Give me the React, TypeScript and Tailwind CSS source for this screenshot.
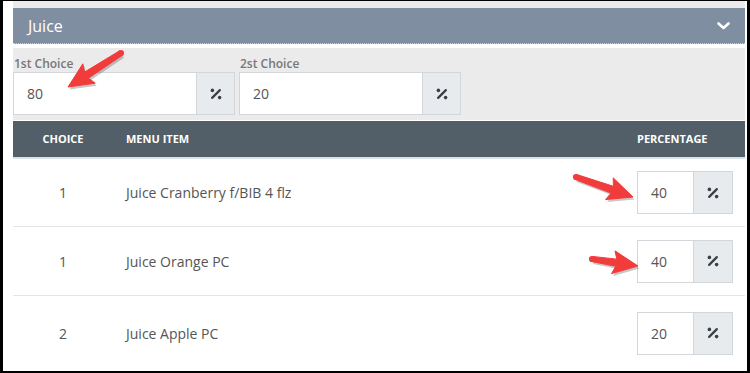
import React from 'react';

const font = { fontFamily: '"Open Sans", "Liberation Sans", sans-serif' };

function PercentIcon() {
  return (
    <svg width="12" height="12" viewBox="0 0 10 10" className="text-[#3a4046]">
      <line x1="1.8" y1="8.2" x2="8.2" y2="1.8" stroke="currentColor" strokeWidth="1.9" strokeLinecap="round" />
      <circle cx="2" cy="2" r="1.5" fill="currentColor" />
      <circle cx="8" cy="8" r="1.5" fill="currentColor" />
    </svg>
  );
}

function PercentInput({ value, inputClass, buttonClass }: { value: string; inputClass: string; buttonClass: string }) {
  return (
    <div className="flex h-[43px]">
      <div className={`flex items-center bg-white border border-[#d3d7dc] text-[14px] text-[#555] ${inputClass}`}>{value}</div>
      <div className={`flex items-center justify-center bg-[#e8ebee] border border-l-0 border-[#d3d7dc] ${buttonClass}`}>
        <PercentIcon />
      </div>
    </div>
  );
}

function Arrow({ from, to }: { from: [number, number]; to: [number, number] }) {
  const [x1, y1] = from;
  const [x2, y2] = to;
  const dx = x2 - x1;
  const dy = y2 - y1;
  const len = Math.hypot(dx, dy);
  const ux = dx / len;
  const uy = dy / len;
  const nx = -uy;
  const ny = ux;
  const head = 22;
  const hw = 11.5;
  const sw = 3.6;
  const tw = 2.6;
  const bx = x2 - ux * head;
  const by = y2 - uy * head;
  const pts = [
    [x1 + nx * tw, y1 + ny * tw],
    [bx + nx * sw, by + ny * sw],
    [bx + nx * hw - ux * 3, by + ny * hw - uy * 3],
    [x2, y2],
    [bx - nx * hw - ux * 3, by - ny * hw - uy * 3],
    [bx - nx * sw, by - ny * sw],
    [x1 - nx * tw, y1 - ny * tw],
  ]
    .map((p) => p.join(','))
    .join(' ');
  return (
    <g>
      <polygon points={pts} fill="#000" opacity="0.22" transform="translate(1.5,2.5)" />
      <polygon points={pts} fill="#f23b3b" strokeLinejoin="round" stroke="#f23b3b" strokeWidth="1" />
      <circle cx={x1} cy={y1} r={tw + 0.5} fill="#f23b3b" />
    </g>
  );
}

const rows = [
  { choice: '1', item: 'Juice Cranberry f/BIB 4 flz', pct: '40', h: 'h-[68px]' },
  { choice: '1', item: 'Juice Orange PC', pct: '40', h: 'h-[69px]' },
  { choice: '2', item: 'Juice Apple PC', pct: '20', h: 'h-[74px]' },
];

export default function App() {
  return (
    <div className="relative w-[750px] h-[373px] bg-white border-l-[3px] border-r-[3px] border-t border-b-2 border-black overflow-hidden" style={font}>
      <div className="ml-[10px] mr-[2px]">
        <div className="h-[7px] bg-[#ebebeb]" />
        <div className="flex items-center justify-between h-[36px] bg-[#7f8ea0] border-b border-dotted border-[#c9d0d8] pl-[15px] pr-[15px]">
          <span className="text-[16px] text-white leading-none">Juice</span>
          <svg width="13" height="8" viewBox="0 0 13 8">
            <polyline points="1.5,1.5 6.5,6 11.5,1.5" fill="none" stroke="#fff" strokeWidth="2.6" strokeLinecap="round" strokeLinejoin="round" />
          </svg>
        </div>
        <div className="h-[4px]" />
        <div className="h-[72px] bg-[#ebebeb] flex gap-[4px] pt-[8px]">
          <div className="w-[222px]">
            <div className="text-[12px] font-semibold text-[#777] leading-[16px] pl-[1px]">1st Choice</div>
            <PercentInput value="80" inputClass="w-[184px] pl-[13px]" buttonClass="w-[38px]" />
          </div>
          <div className="w-[222px]">
            <div className="text-[12px] font-semibold text-[#777] leading-[16px] pl-[1px]">2st Choice</div>
            <PercentInput value="20" inputClass="w-[184px] pl-[13px]" buttonClass="w-[38px]" />
          </div>
        </div>
        <div className="h-[1px]" />
        <div className="flex items-center h-[36px] bg-[#535f68] text-white text-[11px] font-bold uppercase border-b-2 border-[#dde2e6] box-content">
          <div className="w-[100px] text-center">Choice</div>
          <div className="flex-1 pl-[13px]">Menu Item</div>
          <div className="w-[108px]">Percentage</div>
        </div>
        {rows.map((r, i) => (
          <div key={i} className={`flex items-center ${r.h} ${i < rows.length - 1 ? 'border-b border-[#e2e5e8]' : ''} text-[14px] text-[#555]`}>
            <div className="w-[100px] text-center">{r.choice}</div>
            <div className="flex-1 pl-[13px]">{r.item}</div>
            <div className="w-[108px]">
              <PercentInput value={r.pct} inputClass="w-[57px] pl-[13px]" buttonClass="w-[39px]" />
            </div>
          </div>
        ))}
      </div>
      <svg className="absolute left-0 top-0 pointer-events-none" width="750" height="373">
        <Arrow from={[118, 52]} to={[65, 86]} />
        <Arrow from={[573, 176]} to={[630, 196]} />
        <Arrow from={[589, 258]} to={[635, 265]} />
      </svg>
    </div>
  );
}
